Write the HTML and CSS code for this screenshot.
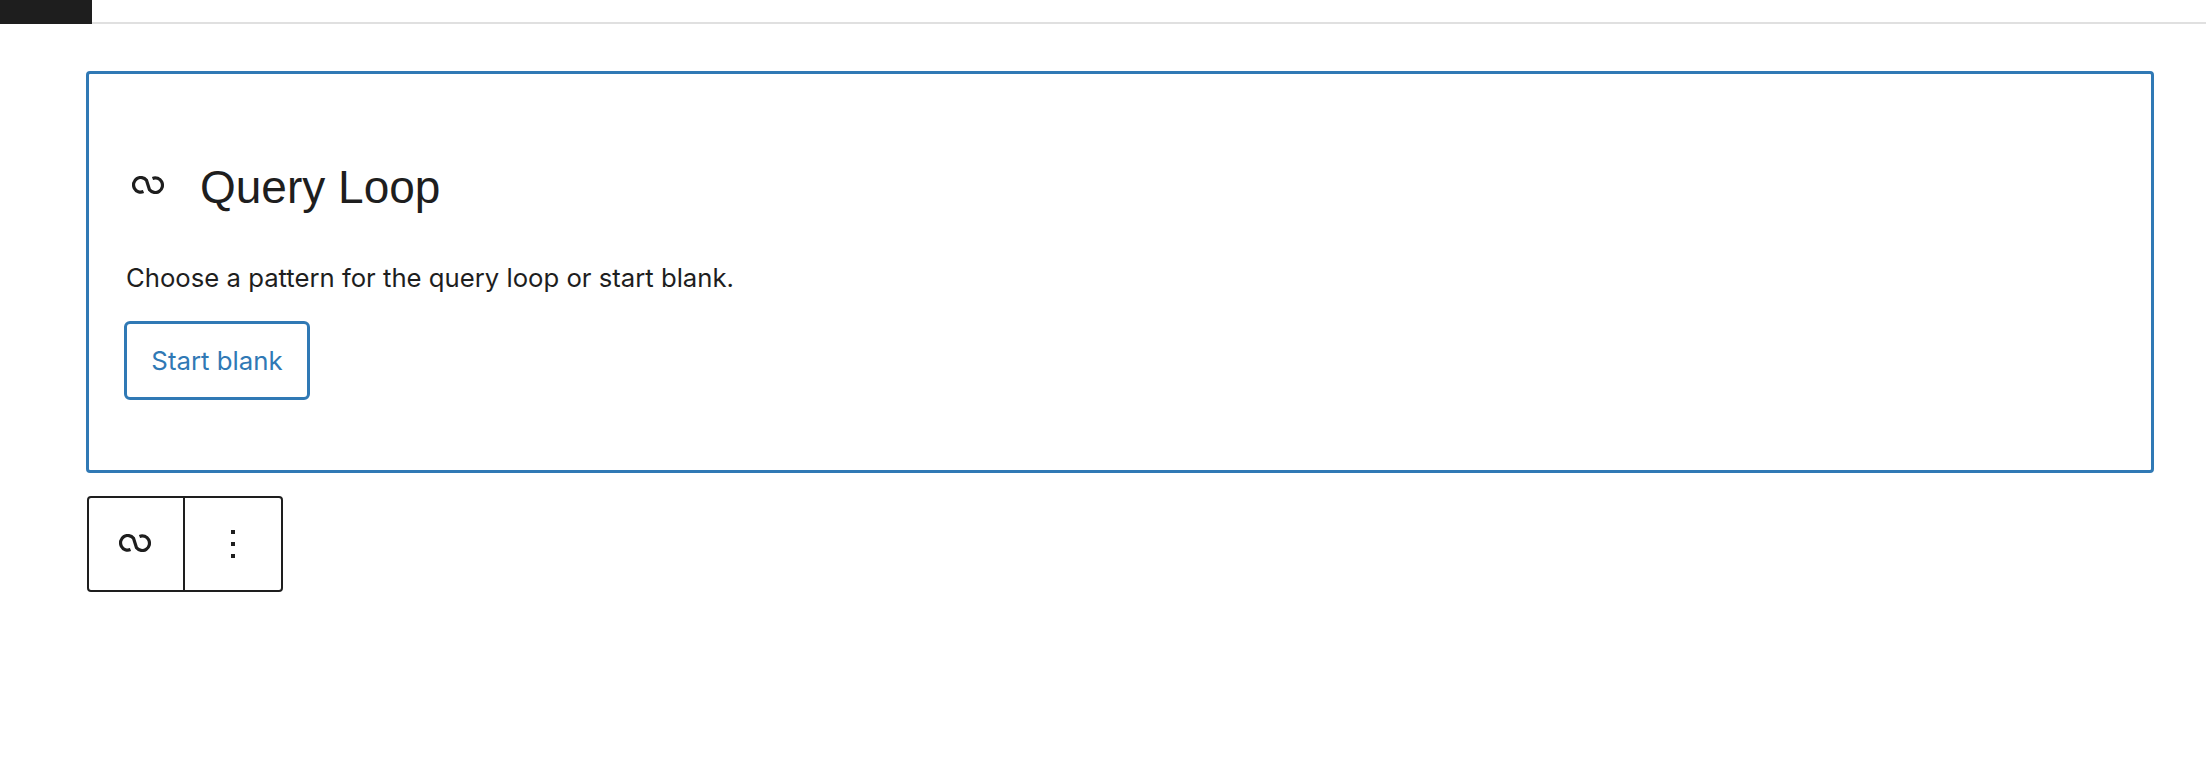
FILE: index.html
```html
<!DOCTYPE html>
<html lang="en">
<head>
    <meta charset="UTF-8">
    <title>Query Loop</title>
    <link rel="stylesheet" href="styles.css">
</head>
<body>
    <div class="topbar">
        <div class="topbar-logo"></div>
    </div>

    <div class="editor">
        <div class="placeholder">
            <div class="placeholder-label">
                <svg class="loop-icon" viewBox="0 0 32 18" aria-hidden="true">
                    <path d="M11.5 15.6A7.3 7.3 0 1 1 14.5 4.2L17.5 13.8A7.3 7.3 0 1 0 20.5 2.4"/>
                </svg>
                <h2 class="placeholder-title">Query Loop</h2>
            </div>
            <p class="placeholder-text">Choose a pattern for the query loop or start blank.</p>
            <button class="start-button">Start blank</button>
        </div>

        <div class="toolbar">
            <div class="toolbar-item toolbar-type">
                <svg class="loop-icon toolbar-icon" viewBox="0 0 32 18" aria-hidden="true">
                    <path d="M11.5 15.6A7.3 7.3 0 1 1 14.5 4.2L17.5 13.8A7.3 7.3 0 1 0 20.5 2.4"/>
                </svg>
            </div>
            <div class="toolbar-item toolbar-more">
                <span class="dot"></span>
                <span class="dot"></span>
                <span class="dot"></span>
            </div>
        </div>
    </div>
</body>
</html>
```

FILE: styles.css
```css
body {
    margin: 0;
    background-color: #ffffff;
    color: #1e1e1e;
    font-family: 'Inter', sans-serif;
}

.topbar {
    height: 22px;
    border-bottom: 2px solid #e0e0e0;
}

.topbar-logo {
    width: 92px;
    height: 24px;
    background-color: #1e1e1e;
}

.editor {
    padding: 47px 52px 0 86px;
}

.placeholder {
    height: 402px;
    box-sizing: border-box;
    border: 3px solid #3079b5;
    border-radius: 4px;
    padding: 85px 35px 0 35px;
}

.placeholder-label {
    display: flex;
    align-items: center;
    gap: 36px;
    margin-left: 8px;
}

.loop-icon {
    width: 32px;
    height: 18px;
    flex: none;
    margin-bottom: 4px;
}

.toolbar-icon {
    margin: 0 2px 3px 0;
}

.loop-icon path {
    fill: none;
    stroke: #1e1e1e;
    stroke-width: 3.2;
}

.placeholder-title {
    margin: 0;
    font-family: 'Liberation Sans', sans-serif;
    font-size: 46px;
    font-weight: 400;
    line-height: 56px;
}

.placeholder-text {
    margin: 45px 0 0 2px;
    font-size: 25.7px;
    line-height: 36px;
}

.start-button {
    display: block;
    width: 186px;
    height: 79px;
    margin-top: 25px;
    background: #ffffff;
    border: 3px solid #3079b5;
    border-radius: 6px;
    color: #3079b5;
    font-family: 'Inter', sans-serif;
    font-size: 25.8px;
}

.toolbar {
    display: flex;
    width: 196px;
    height: 96px;
    box-sizing: border-box;
    margin-top: 23px;
    margin-left: 1px;
    border: 2px solid #1e1e1e;
    border-radius: 4px;
}

.toolbar-item {
    display: flex;
    align-items: center;
    justify-content: center;
}

.toolbar-type {
    width: 94px;
    border-right: 2px solid #1e1e1e;
}

.toolbar-more {
    flex: 1;
    flex-direction: column;
    gap: 8px;
}

.dot {
    width: 4px;
    height: 4px;
    background-color: #1e1e1e;
}
```
